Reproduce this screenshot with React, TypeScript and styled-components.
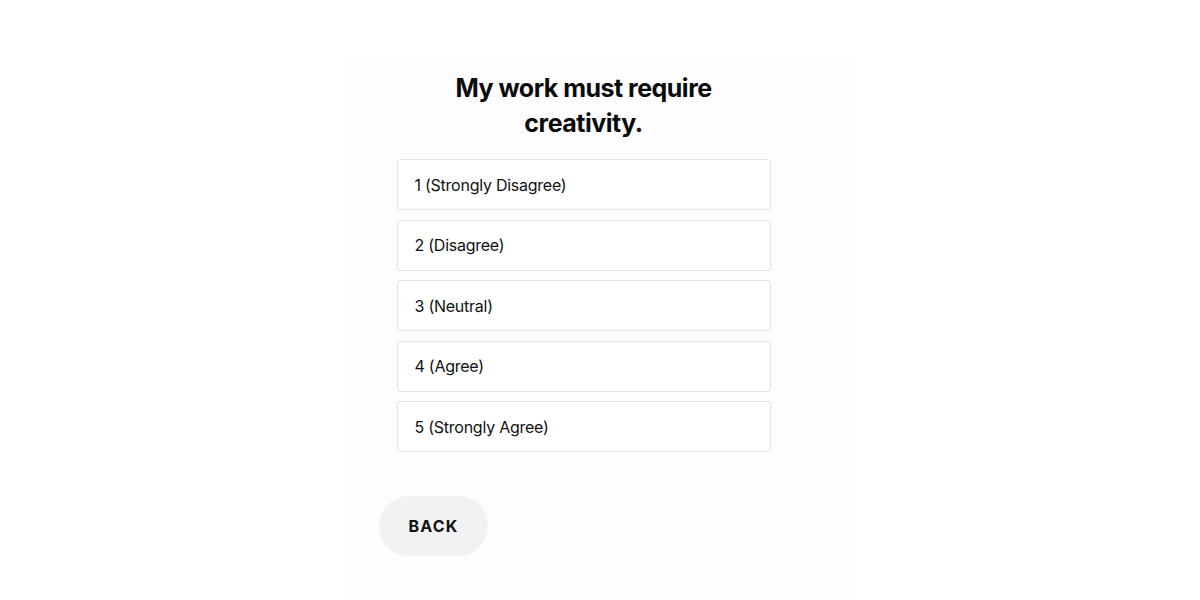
import * as React from "react";
import styled, { createGlobalStyle } from "styled-components";

const GlobalStyle = createGlobalStyle`
  html, body {
    margin: 0;
    padding: 0;
    background: #ffffff;
    font-family: "Inter", "Noto Sans", sans-serif;
    color: #111;
  }
`;

const Page = styled.div`
  width: 1200px;
  height: 600px;
  display: flex;
  justify-content: center;
  padding-top: 60px;
  box-sizing: border-box;
  overflow: hidden;
`;

const Panel = styled.div`
  width: 500px;
  background: #fdfdfd;
  padding: 11px 0 0 29px;
  box-sizing: border-box;
`;

const Column = styled.div`
  width: 409px;
  display: flex;
  flex-direction: column;
  align-items: center;
`;

const Title = styled.h1`
  margin: 0;
  width: 300px;
  text-align: center;
  font-size: 25px;
  line-height: 35px;
  font-weight: 700;
  letter-spacing: -0.5px;
  color: #0a0a0a;
`;

const Options = styled.div`
  margin-top: 18px;
  display: flex;
  flex-direction: column;
  gap: 9.5px;
`;

const Option = styled.button`
  width: 374px;
  height: 51px;
  box-sizing: border-box;
  background: #ffffff;
  border: 1px solid #e4e4e4;
  border-radius: 3px;
  padding: 0 0 0 17px;
  text-align: left;
  font-family: inherit;
  font-size: 16px;
  letter-spacing: -0.25px;
  color: #111;
  cursor: pointer;
`;

const Footer = styled.div`
  align-self: stretch;
  margin-top: 44px;
`;

const BackButton = styled.button`
  width: 109px;
  height: 60px;
  border: none;
  border-radius: 30px;
  background: #f2f2f2;
  font-family: inherit;
  font-size: 16px;
  font-weight: 700;
  letter-spacing: 1.2px;
  color: #111;
  cursor: pointer;
`;

const answers = [
  "1 (Strongly Disagree)",
  "2 (Disagree)",
  "3 (Neutral)",
  "4 (Agree)",
  "5 (Strongly Agree)",
];

export default function App() {
  return (
    <>
      <GlobalStyle />
      <Page>
        <Panel>
          <Column>
            <Title>My work must require creativity.</Title>
            <Options>
              {answers.map((a) => (
                <Option key={a}>{a}</Option>
              ))}
            </Options>
            <Footer>
              <BackButton>BACK</BackButton>
            </Footer>
          </Column>
        </Panel>
      </Page>
    </>
  );
}
